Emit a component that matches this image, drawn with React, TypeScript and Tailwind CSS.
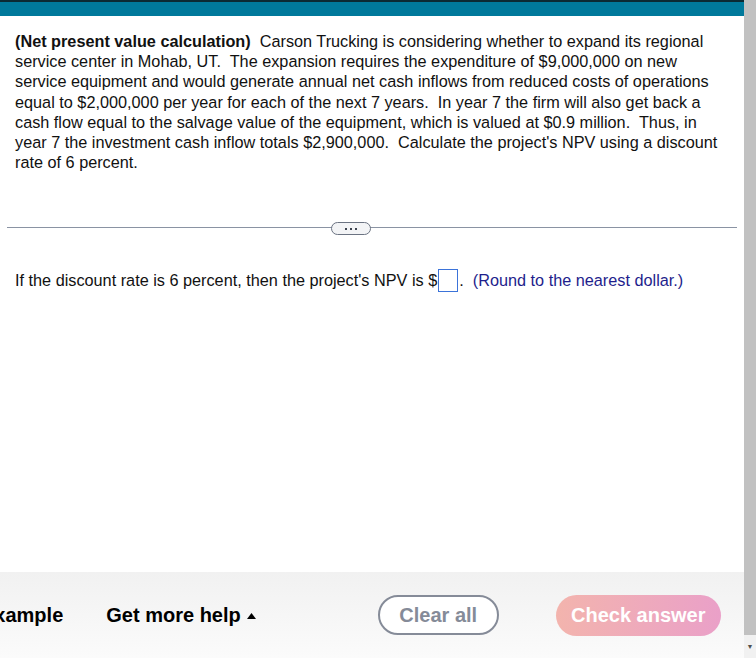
import { useState } from 'react'

export default function App() {
  const [npv, setNpv] = useState('')

  return (
    <div className="flex h-[658px] w-[756px] overflow-hidden bg-white font-['Liberation_Sans',Arial,sans-serif] text-black">
      <div className="flex min-w-0 flex-1 flex-col">
        <div className="h-[16px] shrink-0 border-t-2 border-[#0b2a33] bg-[#00799b]" />

        <div className="flex-1 pl-[15px] pr-[17px] pt-[15px]">
          <p className="text-[16.25px] leading-[20.2px] text-[#111]">
            <span className="font-bold">(Net present value calculation)</span>
            {'\u00a0 '}Carson Trucking is considering whether to expand its regional service center in Mohab, UT.{'\u00a0 '}The
            expansion requires the expenditure of $9,000,000 on new service equipment and would generate annual net cash
            inflows from reduced costs of operations equal to $2,000,000 per year for each of the next 7 years.{'\u00a0 '}In
            year 7 the firm will also get back a cash flow equal to the salvage value of the equipment, which is valued at
            $0.9 million.{'\u00a0 '}Thus, in year 7 the investment cash inflow totals $2,900,000.{'\u00a0 '}Calculate the
            project's NPV using a discount rate of 6 percent.
          </p>
        </div>
      </div>

      <div className="flex w-[12px] shrink-0 flex-col bg-[#f1f1f1]">
        <div className="h-[635px] bg-[#c1c1c1]" />
        <div className="flex flex-1 items-center justify-center text-[7px] leading-none text-[#505050]">▼</div>
      </div>

      <Overlay npv={npv} setNpv={setNpv} />
    </div>
  )
}

function Overlay({ npv, setNpv }: { npv: string; setNpv: (v: string) => void }) {
  return (
    <div className="pointer-events-none absolute left-0 top-0 flex h-[658px] w-[744px] flex-col">
      <div className="h-[206px] shrink-0" />
      <div className="relative mx-[7px] mt-[16px] h-[12px] shrink-0">
        <div className="absolute left-0 right-0 top-[5px] h-px bg-[#8a93a3]" />
        <div className="absolute left-[324px] top-0 flex h-[13px] w-[40px] items-center justify-center gap-[3px] rounded-full border border-[#6b7382] bg-[#f3f4f6]">
          <span className="h-[2px] w-[2px] bg-[#3d4450]" />
          <span className="h-[2px] w-[2px] bg-[#3d4450]" />
          <span className="h-[2px] w-[2px] bg-[#3d4450]" />
        </div>
      </div>

      <div className="pointer-events-auto mt-[34px] flex items-center px-[15px] text-[16.25px] text-[#111]">
        <span>If the discount rate is 6 percent, then the project's NPV is $</span>
        <input
          value={npv}
          onChange={(e) => setNpv(e.target.value)}
          className="mx-px h-[23px] w-[20px] border border-[#3b73d9] bg-white px-0 outline-none"
        />
        <span>.{'\u00a0\u00a0'}</span>
        <span className="text-[#1e1e8c]">(Round to the nearest dollar.)</span>
      </div>

      <div className="flex-1" />

      <div className="pointer-events-auto flex h-[86px] shrink-0 items-center bg-gradient-to-b from-[#f1f1f1] to-[#fbfbfb]">
        <span className="ml-[-19px] text-[20px] font-bold text-black">Example</span>
        <span className="ml-[43px] flex items-center gap-[6px] text-[20px] font-bold text-black">
          Get more help
          <svg width="9" height="6" viewBox="0 0 9 6" className="mt-[2px]">
            <path d="M0 6 L4.5 0 L9 6 Z" fill="#000" />
          </svg>
        </span>
        <button className="ml-[122px] h-[40px] w-[121px] rounded-full border-2 border-[#858b98] bg-white text-[20px] font-bold text-[#858b98]">
          Clear all
        </button>
        <button className="ml-[57px] h-[41px] w-[165px] rounded-full bg-gradient-to-r from-[#f3b4ad] to-[#eaa0c8] text-[20px] font-bold text-white">
          Check answer
        </button>
      </div>
    </div>
  )
}
